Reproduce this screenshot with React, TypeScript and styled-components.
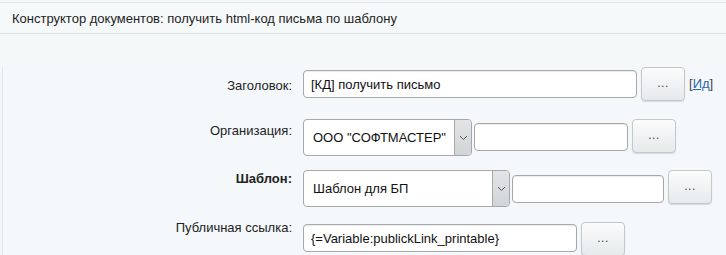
import React from "react";
import styled, { createGlobalStyle } from "styled-components";

const GlobalStyle = createGlobalStyle`
  html, body {
    margin: 0;
    padding: 0;
    background: #f5f8f9;
  }
  body {
    font-family: "Liberation Sans", Arial, sans-serif;
    color: #000;
  }
`;

const App: React.FC = () => {
  return (
    <Page>
      <GlobalStyle />
      <Header>Конструктор документов: получить html-код письма по шаблону</Header>
      <Body>
        <Row $top={33}>
          <Label $offset={11}>Заголовок:</Label>
          <Controls>
            <TextInput $width={334} $nudge={3}>[КД] получить письмо</TextInput>
            <DotsButton>...</DotsButton>
            <IdLink>
              [<a href="#">Ид</a>]
            </IdLink>
          </Controls>
        </Row>

        <Row $top={18}>
          <Label $offset={4}>Организация:</Label>
          <Controls>
            <Select $width={169}>
              <SelectText>ООО "СОФТМАСТЕР"</SelectText>
              <Arrow>
                <Chevron />
              </Arrow>
            </Select>
            <TextInput $width={154} $nudge={4} />
            <DotsButton>...</DotsButton>
          </Controls>
        </Row>

        <Row $top={14}>
          <Label $offset={1} $bold>
            Шаблон:
          </Label>
          <Controls>
            <Select $width={207}>
              <SelectText>Шаблон для БП</SelectText>
              <Arrow>
                <Chevron />
              </Arrow>
            </Select>
            <TextInput $width={152} $nudge={5} />
            <DotsButton>...</DotsButton>
          </Controls>
        </Row>

        <Row $top={15}>
          <Label $offset={-2}>Публичная ссылка:</Label>
          <Controls>
            <TextInput $width={274} $nudge={2}>
              {"{=Variable:publickLink_printable}"}
            </TextInput>
            <DotsButton>...</DotsButton>
          </Controls>
        </Row>
      </Body>
    </Page>
  );
};

export default App;

const Chevron: React.FC = () => (
  <svg width="9" height="6" viewBox="0 0 9 6">
    <path d="M1 1 L4.5 4.5 L8 1" fill="none" stroke="#555" strokeWidth="1" />
  </svg>
);

// Styled components
const Page = styled.div`
  width: 726px;
  height: 255px;
  overflow: hidden;
  background: #f5f8f9;
`;

const Header = styled.div`
  margin-top: 2px;
  height: 30px;
  border-top: 1px solid #e2e6e8;
  border-bottom: 1px solid #dfe3e5;
  padding-left: 12px;
  display: flex;
  align-items: center;
  font-size: 13px;
  color: #1e1e1e;
  background: #f6f9fa;
`;

const Body = styled.div`
  margin-left: 2px;
  border-left: 1px solid #e3e6e8;
  height: 230px;
  background: #f4f8fa;
`;

const Row = styled.div<{ $top: number }>`
  display: flex;
  align-items: flex-start;
  margin-top: ${(p) => p.$top}px;
`;

const Label = styled.div<{ $offset: number; $bold?: boolean }>`
  width: 289px;
  flex-shrink: 0;
  text-align: right;
  margin-top: ${(p) => p.$offset}px;
  font-size: 13px;
  font-weight: ${(p) => (p.$bold ? "bold" : "normal")};
  color: #222;
  line-height: 16px;
`;

const Controls = styled.div`
  display: flex;
  align-items: flex-start;
  margin-left: 11px;
`;

const TextInput = styled.div<{ $width: number; $nudge: number }>`
  box-sizing: border-box;
  width: ${(p) => p.$width}px;
  height: 28px;
  margin-top: ${(p) => p.$nudge}px;
  background: #fff;
  border: 1px solid #a4a9ab;
  border-radius: 4px;
  box-shadow: inset 0 1px 1px rgba(0, 0, 0, 0.08);
  padding: 0 7px;
  display: flex;
  align-items: center;
  font-size: 13px;
  color: #111;
  white-space: nowrap;
  overflow: hidden;
`;

const Select = styled.div<{ $width: number }>`
  box-sizing: border-box;
  width: ${(p) => p.$width}px;
  height: 37px;
  background: #fff;
  border: 1px solid #a4a9ab;
  border-radius: 4px;
  display: flex;
  overflow: hidden;
  margin-right: 2px;
`;

const SelectText = styled.div`
  flex: 1;
  display: flex;
  align-items: center;
  padding-left: 9px;
  font-size: 13px;
  color: #111;
  white-space: nowrap;
`;

const Arrow = styled.div`
  width: 16px;
  border-left: 1px solid #a4a9ab;
  background: linear-gradient(#e2e4e5, #d2d5d6);
  display: flex;
  align-items: center;
  justify-content: center;
`;

const DotsButton = styled.div`
  box-sizing: border-box;
  width: 44px;
  height: 34px;
  margin-left: 4px;
  border: 1px solid #c3c8cb;
  border-radius: 4px;
  background: linear-gradient(#fbfcfc, #e6eaeb);
  box-shadow: 0 1px 1px rgba(0, 0, 0, 0.12);
  display: flex;
  align-items: center;
  justify-content: center;
  font-size: 12px;
  color: #444;
  letter-spacing: 0.5px;
  padding-bottom: 3px;
`;

const IdLink = styled.div`
  margin-left: 4px;
  padding-top: 9px;
  font-size: 13px;
  color: #444;
  a {
    color: #2a68a8;
    text-decoration: underline;
  }
`;
